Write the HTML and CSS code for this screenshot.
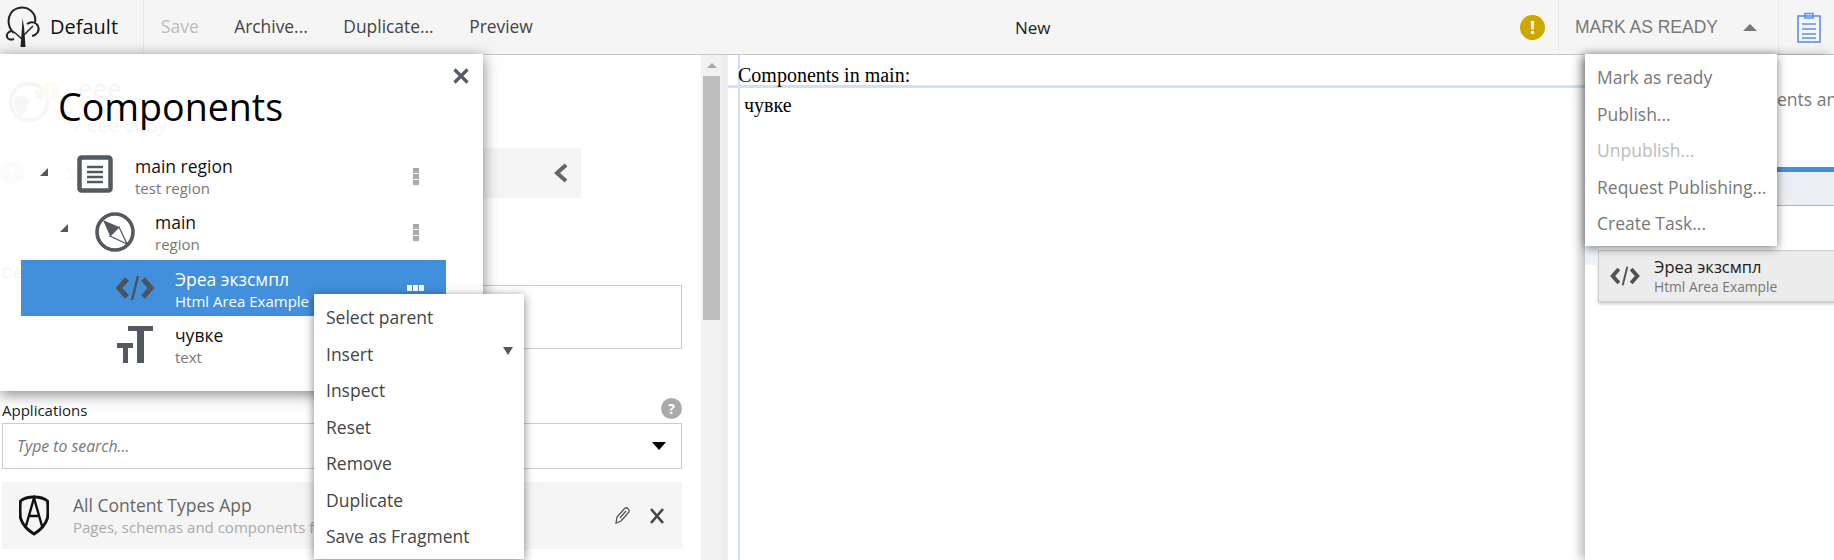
FILE: index.html
```html
<!DOCTYPE html>
<html lang="en">
<head>
<meta charset="utf-8">
<title>Default</title>
<link rel="stylesheet" href="styles.css">
</head>
<body>
<header class="toolbar">
  <div class="brand">
    <svg class="tree" width="36" height="42" viewBox="0 0 36 42" fill="none" stroke="#222" stroke-width="2">
      <path d="M9 27C3 22 2 13 6 7 10 1 20 0 25 4c4 3 6 7 5 12"/>
      <path d="M22 18c4-3 9-2 11 2 2 5-1 9-6 10"/>
      <path d="M7 25c-3 0-6 3-5 6 1 3 4 3 7 2"/>
      <path d="M15.500 41l1.500-20 .5-9 1.500 9 .5 6 1 14z" fill="#222" stroke="none"/>
      <path d="M19 29l9-9M17 33l-8-7" stroke-width="1.500"/>
    </svg>
    <span class="brand-name">Default</span>
  </div>
  <nav class="actions">
    <span class="action disabled">Save</span>
    <span class="action">Archive...</span>
    <span class="action">Duplicate...</span>
    <span class="action">Preview</span>
  </nav>
  <div class="status">New</div>
  <div class="warn-cell"><span class="warn">!</span></div>
  <div class="ready">
    <span class="ready-label">MARK AS READY</span>
    <span class="caret-up"></span>
  </div>
  <div class="clip-cell">
    <svg width="24" height="31" viewBox="0 0 24 31" fill="none" stroke="#5b8ff0" stroke-width="1.600">
      <rect x="1" y="4" width="22" height="26"/>
      <path d="M8 4V1.500h8V4M8 4v2h8V4M5 12h14M5 17h14M5 22h14M5 26h14"/>
    </svg>
  </div>
</header>

<main class="workspace">
  <section class="form-panel">
    <div class="page-head">
      <svg class="globe" width="42" height="42" viewBox="0 0 42 42">
        <circle cx="21" cy="21" r="18.500" fill="none" stroke="#555" stroke-width="4"/>
        <path d="M6 18c6-5 12-3 14 1s-3 6-1 11l-6 6C7 30 5 25 6 18zM26 8l7 3 3 8-7-2z" fill="#555"/>
      </svg>
      <span class="head-badge">!</span>
      <div class="head-text">
        <div class="head-name">eee</div>
        <div class="head-path">/ eee-copy</div>
      </div>
    </div>
    <div class="step-bar">
      <span class="help help-ghost">?</span>
      <span class="step-label">Site</span>
      <svg class="chevron" width="14" height="20" viewBox="0 0 14 20" fill="none" stroke="#666" stroke-width="4"><path d="M12 2L3 10l9 8"/></svg>
    </div>
    <label class="field-label desc-label">Description</label>
    <div class="textbox"></div>
    <div class="apps-head">
      <label class="field-label">Applications</label>
      <span class="help">?</span>
    </div>
    <div class="combo">
      <span class="placeholder">Type to search...</span>
      <span class="caret-down"></span>
    </div>
    <div class="app-row">
      <svg class="app-logo" width="30" height="41" viewBox="0 0 30 41" fill="none" stroke="#111" stroke-width="2.800">
        <path d="M15 2c5 0 10 1 13.500 4 .5 6 .5 12 0 17-2 7-7 12-13.500 16C8.500 35 3.500 30 1.500 23c-.5-5-.5-11 0-17C5 3 10 2 15 2z"/>
        <path d="M7 31L15 3l8 28M9.500 21h11" stroke-width="2.400"/>
      </svg>
      <div class="app-text">
        <div class="app-title">All Content Types App</div>
        <div class="app-sub">Pages, schemas and components for testing all input types</div>
      </div>
      <svg class="app-edit" width="16" height="17" viewBox="0 0 16 17" fill="none" stroke="#555" stroke-width="1.300">
        <path d="M1 16l1-6 8-9c2-1 5 2 4 4l-8 9zM5 11l6-7M7 13l6-7"/>
      </svg>
      <svg class="app-remove" width="14" height="16" viewBox="0 0 14 16" fill="none" stroke="#444" stroke-width="2.600"><path d="M1 1l12 14M13 1L1 15"/></svg>
    </div>
  </section>

  <div class="scrollbar">
    <span class="scroll-arrow"></span>
    <span class="scroll-thumb"></span>
  </div>

  <section class="live">
    <i class="guide-v"></i>
    <i class="guide-h"></i>
    <div class="live-title">Components in main:</div>
    <div class="live-text">чувке</div>
  </section>

  <aside class="context">
    <div class="ctx-text">Drag and drop components and</div>
    <div class="ctx-tab"></div>
    <div class="ctx-item">
      <svg class="ctx-icon" width="30" height="20" viewBox="0 0 38 26" fill="none" stroke="#4f5359" stroke-width="5"><path d="M11 4L3 13l8 9M27 4l8 9-8 9"/><path d="M22 1l-6 24" stroke-width="2.500"/></svg>
      <div class="ctx-copy">
        <div class="ctx-name">Эреа экзсмпл</div>
        <div class="ctx-sub">Html Area Example</div>
      </div>
    </div>
  </aside>
</main>

<section class="components">
  <button class="close" aria-label="Close">
    <svg width="16" height="16" viewBox="0 0 16 16" fill="none" stroke="#555c66" stroke-width="3.200"><path d="M1.500 1.500l13 13M14.500 1.500l-13 13"/></svg>
  </button>
  <h2 class="comp-title">Components</h2>
  <div class="tree-list">
    <div class="row lvl0">
      <span class="arrow"></span>
      <span class="ico">
        <svg width="36" height="42" viewBox="0 0 36 42" fill="none" stroke="#545860"><rect x="2.500" y="2.500" width="31" height="33" rx="2" stroke-width="4.500"/><path d="M10 12h16M10 17h16M10 22h16M10 27h16" stroke-width="2.400"/></svg>
      </span>
      <div class="text"><div class="name">main region</div><div class="sub">test region</div></div>
      <span class="kebab"></span>
    </div>
    <div class="row lvl1">
      <span class="arrow"></span>
      <span class="ico">
        <svg width="40" height="40" viewBox="0 0 40 40" fill="none" stroke="#545860"><circle cx="20" cy="20" r="18" stroke-width="3.600"/><path d="M8 8l16 7-9 9z" fill="#545860" stroke="none"/><path d="M32 32l-17-8 9-9z" stroke-width="1.300"/></svg>
      </span>
      <div class="text"><div class="name">main</div><div class="sub">region</div></div>
      <span class="kebab"></span>
    </div>
    <div class="row lvl2 selected">
      <span class="arrow none"></span>
      <span class="ico">
        <svg width="38" height="26" viewBox="0 0 38 26" fill="none" stroke="#4f5359" stroke-width="5"><path d="M11 4L3 13l8 9M27 4l8 9-8 9"/><path d="M22 1l-6 24" stroke-width="2.500"/></svg>
      </span>
      <div class="text"><div class="name">Эреа экзсмпл</div><div class="sub">Html Area Example</div></div>
      <span class="kebab horizontal"></span>
    </div>
    <div class="row lvl2">
      <span class="arrow none"></span>
      <span class="ico">
        <svg width="36" height="37" viewBox="0 0 36 37" fill="#545860"><path d="M11 0h25v5H27v32h-7V5h-9zM0 17h16v5h-5v15H6V22H0z"/></svg>
      </span>
      <div class="text"><div class="name">чувке</div><div class="sub">text</div></div>
    </div>
  </div>
</section>

<ul class="menu context-menu">
  <li>Select parent</li>
  <li class="has-sub">Insert<span class="sub-caret"></span></li>
  <li>Inspect</li>
  <li>Reset</li>
  <li>Remove</li>
  <li>Duplicate</li>
  <li>Save as Fragment</li>
</ul>

<ul class="menu publish-menu">
  <li>Mark as ready</li>
  <li>Publish...</li>
  <li class="off">Unpublish...</li>
  <li>Request Publishing...</li>
  <li>Create Task...</li>
</ul>
</body>
</html>
```

FILE: styles.css
```css
* { box-sizing: border-box; }
html, body { height: 100%; }
body {
  margin: 0;
  height: 560px;
  overflow: hidden;
  font-family: "Open Sans", sans-serif;
  color: #333;
  background: #fff;
  display: flex;
  flex-direction: column;
}

/* toolbar */
.toolbar {
  flex: none;
  height: 55px;
  display: flex;
  align-items: stretch;
  background: #f5f5f5;
  border-bottom: 1px solid #c8c8c8;
}
.brand {
  width: 144px;
  display: flex;
  align-items: center;
  padding-left: 5px;
  border-right: 1px solid #e8e8e8;
}
.brand-name { margin: 0 0 2px 9px; font-size: 20px; color: #111; }
.actions { display: flex; align-items: center; gap: 35.500px; padding: 0 0 2px 17px; width: 600px; font-size: 17.400px; color: #444; }
.action.disabled { color: #bbb; }
.status { flex: 1; display: flex; align-items: center; font-size: 17px; color: #222; padding-left: 271px; }
.warn-cell { width: 40px; display: flex; align-items: center; padding-left: 2px; }
.warn {
  width: 25px; height: 25px; border-radius: 50%;
  background: #cca800; color: #fff;
  font-weight: 700; font-size: 18px; line-height: 25px; text-align: center;
}
.ready {
  width: 221px;
  flex: none;
  display: flex; align-items: center;
  padding-left: 16px;
  border-left: 1px solid #e8e8e8;
  border-right: 1px solid #e8e8e8;
}
.ready-label { font-family: "Liberation Sans", Arial, sans-serif; font-size: 17.500px; color: #777; }
.caret-up {
  margin-left: 25px;
  border-left: 7.500px solid transparent;
  border-right: 7.500px solid transparent;
  border-bottom: 7px solid #777;
}
.clip-cell { width: 55px; flex: none; display: flex; align-items: center; padding-left: 18px; }

/* layout */
.workspace { flex: 1; min-height: 0; display: flex; }
.form-panel { width: 701px; padding: 0 19px 0 2px; overflow: hidden; }

.page-head { height: 93px; display: flex; padding: 26px 0 0 6px; position: relative; }
.globe { flex: none; }
.head-badge {
  position: absolute; left: 39px; top: 27px;
  width: 19px; height: 19px; border-radius: 50%;
  background: #cca800; color: #fff; font-size: 13px; font-weight: 700; line-height: 19px; text-align: center;
}
.head-text { margin: -9px 0 0 28px; }
.head-name { font-size: 26px; line-height: 32px; color: #333; }
.head-path { font-size: 19px; line-height: 26px; color: #555; margin-left: -3px; margin-top: 8px; }

.step-bar {
  height: 50px;
  margin-left: -2px;
  margin-right: 101px;
  background: #f5f5f5;
  display: flex;
  align-items: center;
}
.step-label { margin-left: 43px; font-size: 16px; color: #555; }
.chevron { margin-left: auto; margin-right: 13px; }

.help {
  width: 21px; height: 21px; border-radius: 50%;
  background: #aaa; color: #fff;
  font-size: 14px; font-weight: 700; line-height: 21px; text-align: center;
}
.help-ghost { width: 24px; height: 24px; line-height: 24px; }

.field-label { display: block; font-size: 15px; line-height: 20px; color: #222; }
.desc-label { margin-top: 64px; margin-bottom: 3px; }
.textbox { height: 64px; border: 1px solid #ccc; }
.apps-head { margin-top: 49px; height: 25px; display: flex; justify-content: space-between; align-items: flex-start; }
.apps-head .field-label { margin-top: 2px; }
.combo {
  height: 46px;
  border: 1px solid #ccc;
  display: flex;
  align-items: center;
  padding: 0 15px 0 14px;
}
.placeholder { font-size: 15.800px; font-style: italic; color: #777; }
.caret-down {
  margin-left: auto;
  border-left: 7px solid transparent;
  border-right: 7px solid transparent;
  border-top: 8px solid #000;
}
.app-row {
  margin-top: 13px;
  height: 67px;
  background: #f5f5f5;
  display: flex;
  align-items: center;
  padding: 0 18px 0 17px;
}
.app-logo { flex: none; }
.app-text { margin-left: 24px; white-space: nowrap; width: 500px; overflow: hidden; }
.app-title { font-size: 17.500px; line-height: 22px; color: #666; }
.app-sub { font-size: 15px; line-height: 22px; color: #aaa; }
.app-edit { margin-left: auto; }
.app-remove { margin-left: 19px; }

/* scrollbar */
.scrollbar {
  width: 27px;
  flex: none;
  background: linear-gradient(90deg, #f1f1f1 21px, #ededed 21px);
  position: relative;
  padding: 8px 0 0 2px;
}
.scroll-arrow {
  display: block; width: 0; margin-left: 4px;
  border-left: 5px solid transparent;
  border-right: 5px solid transparent;
  border-bottom: 5px solid #a8a8a8;
}
.scroll-thumb { display: block; width: 17px; height: 244px; margin-top: 8px; background: #bdbdbd; }

/* live */
.live {
  flex: 1;
  min-width: 0;
  position: relative;
  font-family: "Liberation Serif", "Times New Roman", serif;
  color: #000;
  font-size: 20px;
  padding-left: 10px;
}
.guide-v { position: absolute; left: 10px; top: 0; bottom: 0; width: 2px; background: #cfe0fc; }
.guide-h { position: absolute; left: 0; right: 0; top: 30px; height: 3px; background: #cfe0fc; }
.live-title { line-height: 23px; margin-top: 9px; position: relative; }
.live-text { margin: 7px 0 0 6px; line-height: 23px; position: relative; }

/* context */
.context {
  width: 249px;
  flex: none;
  background: #fff;
  box-shadow: -4px 0 10px rgba(0,0,0,.3);
  position: relative;
  overflow: hidden;
}
.ctx-text { margin: 32px 0 0 2px; font-size: 17.500px; line-height: 24px; color: #777; white-space: nowrap; }
.ctx-tab {
  margin-top: 56px;
  height: 39px;
  background: #eceef4;
  border-top: 5px solid #428fdc;
  border-bottom: 1px solid #8fbdea;
}
.ctx-item {
  margin: 44px -10px 0 13px;
  height: 52px;
  display: flex;
  align-items: center;
  background: #ececec;
  border: 1px solid #ccc;
  box-shadow: 0 2px 3px rgba(0,0,0,.2);
  position: relative;
}
.ctx-item::before {
  content: "";
  position: absolute;
  left: -14px; top: -4px;
  width: 13px; height: 18px;
  background: #eef2fa;
}
.ctx-icon { margin: 0 14px 0 11px; flex: none; }
.ctx-copy { padding-top: 2px; }
.ctx-name { font-size: 16.500px; line-height: 20px; color: #222; }
.ctx-sub { font-size: 13.800px; line-height: 20px; color: #777; }

/* components dialog */
.components {
  position: absolute;
  left: 0; top: 54px;
  width: 483px; height: 337px;
  background: rgba(255,255,255,.95);
  box-shadow: 0 3px 14px rgba(0,0,0,.5);
  padding: 28px 37px 0 21px;
}
.close {
  position: absolute; right: 14px; top: 14px;
  padding: 0; border: 0; background: none; line-height: 0;
}
.comp-title {
  margin: 0 0 16px 37px;
  font-size: 37.600px; line-height: 50px; font-weight: 400; color: #000;
}
.row { height: 56px; display: flex; align-items: center; }
.lvl0 { padding-left: 19px; }
.lvl1 { padding-left: 39px; }
.lvl2 { padding-left: 59px; }
.selected { background: #428fdc; color: #fff; }
.arrow {
  flex: none; width: 0; height: 0;
  margin-top: -8px;
  border-left: 8px solid transparent;
  border-bottom: 8px solid #555;
}
.arrow.none { border-color: transparent; }
.ico { flex: none; width: 50px; margin-left: 22px; margin-right: 15px; display: flex; justify-content: center; }
.text { padding-top: 4px; white-space: nowrap; }
.lvl0 .text, .lvl1 .text { padding-top: 2px; }
.name { font-size: 17.500px; line-height: 22px; color: #111; }
.sub { font-size: 15px; line-height: 22px; color: #777; }
.selected .name, .selected .sub { color: #fff; }
.kebab {
  margin-left: auto; margin-right: 27px; margin-top: 1px;
  width: 6px; height: 17px;
  background: repeating-linear-gradient(#aaa 0 5px, #fff 5px 6px);
}
.kebab.horizontal {
  width: 17px; height: 6px; margin-right: 22px; margin-top: 0;
  background: repeating-linear-gradient(90deg, #fff 0 5px, #428fdc 5px 6px);
}

/* menus */
.menu {
  position: absolute;
  margin: 0;
  padding: 5px 0;
  list-style: none;
  background: #fff;
  font-size: 17.500px;
  box-shadow: 0 2px 9px rgba(0,0,0,.5);
}
.menu li { height: 36.500px; line-height: 36px; padding-left: 12px; white-space: nowrap; position: relative; }
.context-menu { left: 314px; top: 294px; width: 210px; height: 265px; color: #444; }
.sub-caret {
  position: absolute; right: 11px; top: 11px;
  border-left: 5px solid transparent;
  border-right: 5px solid transparent;
  border-top: 8px solid #555;
}
.publish-menu { left: 1585px; top: 54px; width: 192px; height: 192px; color: #777; }
.publish-menu li { padding-left: 12px; }
.publish-menu .off { color: #bbb; }
```
